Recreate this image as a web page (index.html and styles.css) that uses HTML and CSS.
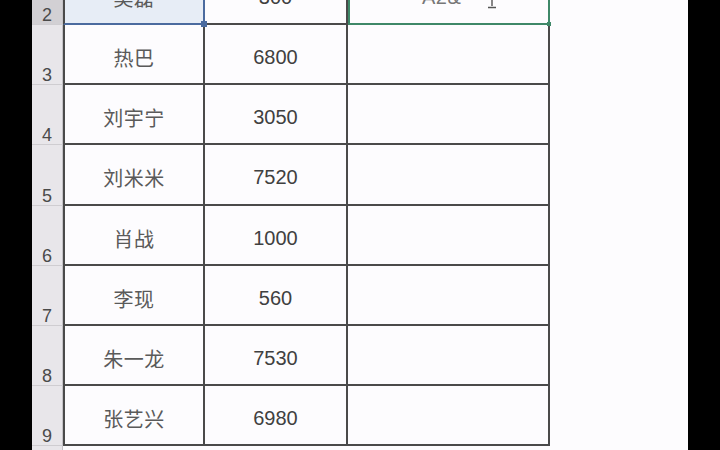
FILE: index.html
```html
<!DOCTYPE html>
<html lang="zh">
<head>
<meta charset="utf-8">
<title>表格</title>
<link rel="stylesheet" href="styles.css">
</head>
<body>
<div class="screen">
  <div class="edge"></div>
  <div class="sheet">
    <div class="rh sel">2</div>
    <div class="c a name active">吴磊<span class="handle blue"></span></div>
    <div class="c num">300</div>
    <div class="c last editing"><span class="formula">A2&amp;</span><svg class="ibeam" width="12" height="46" viewBox="0 0 12 46"><path d="M6 0V41M2 42.5H10" stroke="#555" stroke-width="1.4" fill="none"/></svg><span class="handle green"></span></div>
    <div class="pad"></div>

    <div class="rh">3</div>
    <div class="c a name">热巴</div>
    <div class="c num">6800</div>
    <div class="c last"></div>
    <div class="pad"></div>

    <div class="rh">4</div>
    <div class="c a name">刘宇宁</div>
    <div class="c num">3050</div>
    <div class="c last"></div>
    <div class="pad"></div>

    <div class="rh">5</div>
    <div class="c a name">刘米米</div>
    <div class="c num">7520</div>
    <div class="c last"></div>
    <div class="pad"></div>

    <div class="rh">6</div>
    <div class="c a name">肖战</div>
    <div class="c num">1000</div>
    <div class="c last"></div>
    <div class="pad"></div>

    <div class="rh">7</div>
    <div class="c a name">李现</div>
    <div class="c num">560</div>
    <div class="c last"></div>
    <div class="pad"></div>

    <div class="rh">8</div>
    <div class="c a name">朱一龙</div>
    <div class="c num">7530</div>
    <div class="c last"></div>
    <div class="pad"></div>

    <div class="rh">9</div>
    <div class="c a name">张艺兴</div>
    <div class="c num">6980</div>
    <div class="c last"></div>
    <div class="pad"></div>

    <div class="rh r10">10</div>
    <div class="e"></div>
    <div class="e"></div>
    <div class="e"></div>
    <div class="pad"></div>
  </div>
  <div class="edge right"></div>
</div>
</body>
</html>
```

FILE: styles.css
```css
* { box-sizing: border-box; }
html, body {
  margin: 0;
  padding: 0;
  background: #000;
  height: 450px;
  overflow: hidden;
}
.screen {
  display: flex;
  width: 720px;
  height: 450px;
  overflow: hidden;
}
.edge {
  width: 32px;
  flex: none;
  background: #000;
}
.edge.right {
  width: 32px;
}
.sheet {
  flex: none;
  width: 656px;
  background: #fdfcfe;
  display: grid;
  grid-template-columns: 31px 142px 143px 202px 1fr;
  grid-auto-rows: 60.15px;
  margin-top: -35px;
  height: 546px;
  align-content: start;
}
.rh {
  background: #e8e6ea;
  border-right: 1px solid #c4c2c6;
  border-bottom: 1px solid #cfcdd1;
  display: flex;
  align-items: flex-end;
  justify-content: center;
  font-family: "Liberation Sans", Arial, sans-serif;
  font-size: 18px;
  line-height: 18px;
  color: #4a4a4a;
  padding-bottom: 0;
}
.rh.sel {
  background: #d2d0d4;
}
.c {
  position: relative;
  border-right: 2px solid #4a4a4a;
  border-bottom: 2px solid #4a4a4a;
  display: flex;
  align-items: center;
  justify-content: center;
  padding-top: 7px;
  font-size: 20px;
  color: #474747;
}
.c.a {
  border-left: 2px solid #4a4a4a;
}
.name {
  font-family: "Noto Sans CJK SC", sans-serif;
  color: #5a5a5a;
  letter-spacing: 0.5px;
}
.num {
  font-family: "Liberation Sans", Arial, sans-serif;
  color: #404040;
}
.active {
  background: #e7edf6;
  border: 2px solid #4b6b9f;
  border-top: none;
}
.editing {
  border: 2px solid #3f8868;
  border-top: none;
  justify-content: flex-start;
  padding-left: 72px;
  font-family: "Liberation Sans", Arial, sans-serif;
  color: #777;
}
.formula {
  letter-spacing: 0.5px;
}
.ibeam {
  position: absolute;
  left: 136px;
  top: 0;
}
.handle {
  position: absolute;
  width: 6px;
  height: 6px;
  right: -4px;
  bottom: -4px;
  z-index: 2;
}
.handle.blue { background: #4b6b9f; }
.handle.green { background: #3f8868; width: 4px; height: 4px; right: -3px; bottom: -3px; }
.pad {
  background: #fdfcfe;
}
.e {
  background: #fdfcfe;
}
```
